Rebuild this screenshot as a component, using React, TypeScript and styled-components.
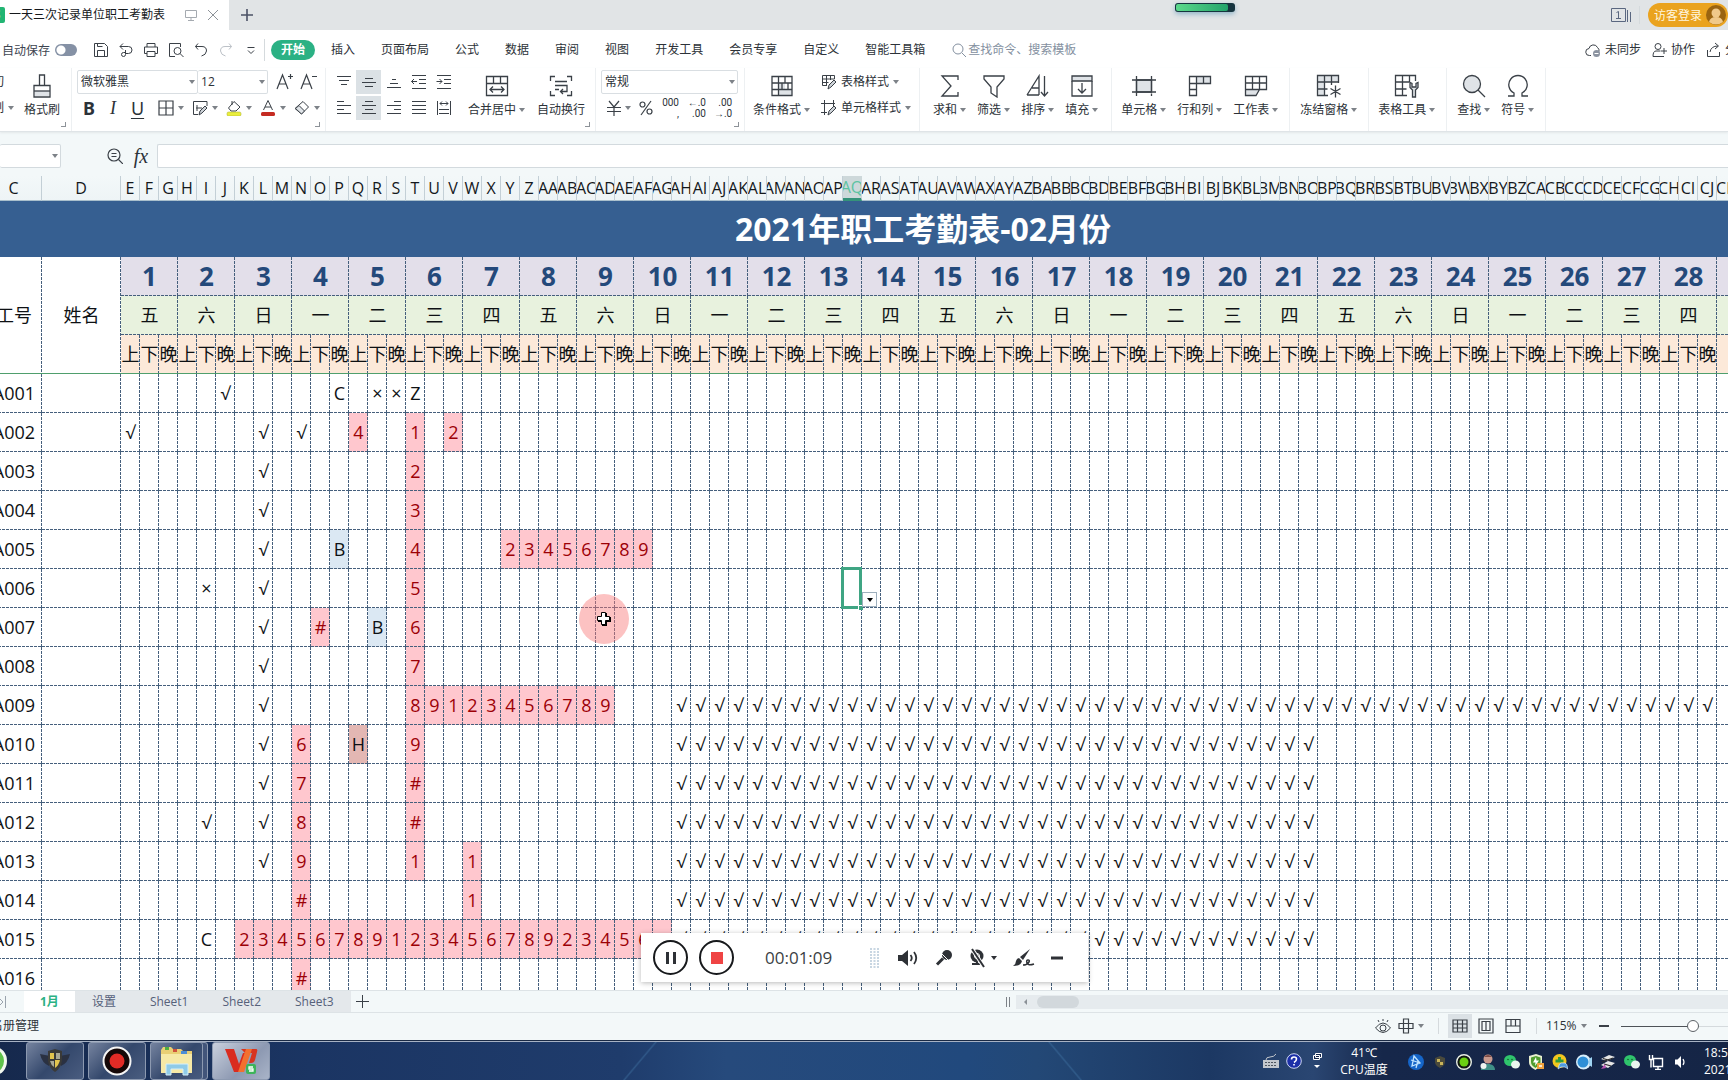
import React from "react";
import styled, { createGlobalStyle, css } from "styled-components";

const GlobalStyle = createGlobalStyle`
  *, *::before, *::after { box-sizing: border-box; }
  body { margin: 0; overflow: hidden; }
  body, button, input, select, table {
    font-family: "Open Sans", "Noto Sans", "Noto Sans CJK SC", sans-serif;
    font-size: 12px;
    color: #2c3238;
  }
  button, select { border: 0; padding: 0; margin: 0; background: none; cursor: pointer; white-space: nowrap; }
  svg { display: block; flex: none; }
`;

const INK = "#3a4047";
const SOFT = "#dfe3e7";
const GREEN = "#2bb184";

/* ---------- shell ---------- */

const Shell = styled.div`
  position: relative;
  display: flex;
  flex-direction: column;
  height: 100vh;
  overflow: hidden;
  background: #f3f8f9;
`;

const Caret = styled.i<{ $color?: string }>`
  flex: none;
  width: 0;
  height: 0;
  border: 3px solid transparent;
  border-top: 4px solid ${(p) => p.$color || "#7d8288"};
  border-bottom: 0;
`;

type IcoProps = { w?: number; h?: number; sw?: number; c?: string; children: React.ReactNode };
const Ico = ({ w = 16, h = 16, sw = 1, c = INK, children }: IcoProps) => (
  <svg width={w} height={h} viewBox={`0 0 ${w} ${h}`} fill="none" stroke={c} strokeWidth={sw} aria-hidden="true">
    {children}
  </svg>
);

/* ---------- title bar ---------- */

const TitleBar = styled.header`
  display: flex;
  align-items: center;
  height: 30px;
  flex: none;
  background: #e1e4e6;
`;

const DocTab = styled.div`
  display: flex;
  align-items: center;
  width: 229px;
  height: 30px;
  padding-right: 10px;
  gap: 10px;
  background: #fff;
`;

const DocLogo = styled.span`
  width: 16px;
  height: 16px;
  margin-left: -11px;
  border-radius: 2px;
  background: #22b573;
  color: #fff;
  font-weight: 700;
  line-height: 16px;
  text-align: center;
`;

const DocName = styled.span`
  flex: 1;
  margin-left: -6px;
  line-height: 20px;
  color: #15181c;
  white-space: nowrap;
`;

const PlainButton = styled.button<{ $l?: number }>`
  display: flex;
  align-items: center;
  gap: 4px;
  margin-left: ${(p) => p.$l ?? 0}px;
  line-height: 16px;
`;

const TitleRight = styled.div`
  display: flex;
  align-items: center;
  gap: 8px;
  margin-left: auto;
`;

const ThinRule = styled.span<{ $h?: number }>`
  flex: none;
  width: 1px;
  height: ${(p) => p.$h || 18}px;
  background: #d5dadd;
`;

const LoginButton = styled.button`
  display: flex;
  align-items: center;
  gap: 4px;
  height: 24px;
  padding: 0 2px 0 6px;
  border-radius: 12px;
  background: #eaa31f;
  color: #fff6df;
`;

const Battery = styled.div`
  position: absolute;
  top: 3px;
  left: 68%;
  width: 60px;
  height: 9px;
  padding: 1px 7px 1px 1px;
  border-radius: 3px;
  background: #16343f;
  box-shadow: 0 2px 5px #8fb4c8;
  &::before {
    content: "";
    display: block;
    height: 7px;
    border-radius: 2px;
    background: linear-gradient(90deg, #5cd98c, #23a36b);
  }
`;

/* ---------- menu ---------- */

const MenuBar = styled.nav`
  display: flex;
  align-items: center;
  height: 38px;
  flex: none;
  padding-top: 1px;
  background: #fff;
  overflow: hidden;
`;

const AutoSave = styled.label`
  display: flex;
  align-items: center;
  gap: 5px;
  padding-left: 2px;
  color: #3d4450;
`;

const Toggle = styled.input`
  appearance: none;
  width: 22px;
  height: 12px;
  margin: 0;
  border-radius: 6px;
  background: radial-gradient(circle at 6px 6px, #fff 0 4px, transparent 5px) #8591a5;
`;

const QuickTools = styled.div`
  display: flex;
  align-items: center;
  gap: 9px;
  margin: 0 5px 0 16px;
`;

const MenuItem = styled.button<{ $active?: boolean }>`
  height: 20px;
  padding: 0 13px;
  line-height: 20px;
  ${(p) =>
    p.$active &&
    css`
      margin: 0 3px 0 6px;
      padding: 0 10px;
      border-radius: 10px;
      background: ${GREEN};
      color: #fff;
      font-weight: 700;
    `}
`;

const SearchBox = styled.label`
  display: flex;
  align-items: center;
  gap: 2px;
  margin-left: 14px;
  input {
    width: 130px;
    padding: 0;
    border: 0;
    outline: 0;
    line-height: 16px;
    &::placeholder { color: #8490a0; opacity: 1; }
  }
`;

const MenuRight = styled.div`
  display: flex;
  align-items: center;
  gap: 11px;
  margin-left: auto;
  margin-right: -21px;
`;

/* ---------- ribbon ---------- */

const Ribbon = styled.div`
  display: flex;
  height: 64px;
  flex: none;
  background: #fff;
  border-bottom: 1px solid #dfe4e7;
  box-shadow: 0 1px 2px #e3e8ea;
  overflow: hidden;
`;

const Group = styled.section<{ $l?: number; $r?: number; $gap?: number }>`
  position: relative;
  display: flex;
  flex: none;
  gap: ${(p) => p.$gap ?? 11}px;
  padding: 2px ${(p) => p.$r ?? 11}px 0 ${(p) => p.$l ?? 9}px;
  border-right: 1px solid #edf0f2;
`;

const Launcher = styled.i`
  position: absolute;
  right: 5px;
  bottom: 4px;
  width: 5px;
  height: 5px;
  border-right: 1px solid #8d9298;
  border-bottom: 1px solid #8d9298;
`;

const Rows = styled.div<{ $cut?: boolean }>`
  display: flex;
  flex-direction: column;
  gap: 2px;
  margin-left: ${(p) => (p.$cut ? -20 : 0)}px;
`;

const Row = styled.div<{ $gap?: number; $between?: boolean; $l?: number }>`
  display: flex;
  align-items: center;
  height: 24px;
  margin-left: ${(p) => p.$l ?? 0}px;
  gap: ${(p) => p.$gap ?? 0}px;
  ${(p) => p.$between && "justify-content: space-between; padding: 0 6px;"}
`;

const Big = styled.button`
  display: flex;
  flex-direction: column;
  align-items: center;
  gap: 4px;
  height: 52px;
  padding-top: 4px;
  span {
    display: flex;
    align-items: center;
    gap: 3px;
    line-height: 16px;
  }
`;

const IconButton = styled.button<{ $on?: boolean; $w?: number }>`
  display: flex;
  align-items: center;
  justify-content: center;
  width: ${(p) => p.$w ?? 25}px;
  height: 24px;
  background: ${(p) => (p.$on ? "#dbe1e5" : "transparent")};
`;

const GlyphButton = styled(IconButton)<{ $style: "b" | "i" | "u" }>`
  font-size: 18px;
  line-height: 20px;
  font-weight: ${(p) => (p.$style === "b" ? 700 : 400)};
  font-style: ${(p) => (p.$style === "i" ? "italic" : "normal")};
  font-family: ${(p) => (p.$style === "i" ? '"Liberation Serif", serif' : '"Noto Sans", sans-serif')};
  text-decoration: ${(p) => (p.$style === "u" ? "underline" : "none")};
  text-underline-offset: 3px;
`;

const SelectBox = styled.label<{ $w: number; $joined?: boolean }>`
  display: flex;
  align-items: center;
  width: ${(p) => p.$w}px;
  height: 24px;
  padding: 0 2px 0 3px;
  border: 1px solid #d9dee2;
  border-left-width: ${(p) => (p.$joined ? 0 : 1)}px;
  border-radius: 2px;
  background: #fff;
  select {
    flex: 1;
    min-width: 0;
    appearance: none;
    outline: 0;
    line-height: 16px;
  }
`;

const Digits = styled.span`
  display: flex;
  flex-direction: column;
  align-items: flex-end;
  font-family: "Roboto", "Noto Sans", sans-serif;
  font-size: 10px;
  line-height: 11px;
`;

/* ---------- formula bar ---------- */

const FormulaBar = styled.div`
  display: flex;
  align-items: center;
  height: 44px;
  flex: none;
  padding-top: 4px;
`;

const NameBox = styled.label`
  display: flex;
  align-items: center;
  width: 61px;
  height: 24px;
  padding-right: 2px;
  border: 1px solid #d3dade;
  border-left: 0;
  border-radius: 2px;
  background: #fff;
  input { flex: 1; min-width: 0; padding: 0; border: 0; outline: 0; }
`;

const FormulaTools = styled.div`
  display: flex;
  align-items: center;
  gap: 10px;
  margin: 0 8px 0 46px;
`;

const Fx = styled.button`
  width: 16px;
  font-family: "Liberation Serif", serif;
  font-style: italic;
  font-size: 20px;
  line-height: 20px;
`;

const FormulaInput = styled.input`
  flex: 1;
  height: 24px;
  border: 1px solid #d3dade;
  border-right: 0;
  border-radius: 2px 0 0 2px;
  background: #fff;
  outline: 0;
`;

/* ---------- sheet ---------- */

const SheetPane = styled.main`
  position: relative;
  flex: 1;
  min-height: 0;
  overflow: hidden;
  background: #fff;
`;

const Sheet = styled.table`
  table-layout: fixed;
  width: 1874px;
  margin-left: -14px;
  border-collapse: separate;
  border-spacing: 0;
  th, td { text-align: center; font-weight: 400; white-space: nowrap; }
`;

const Col = styled.col<{ $w: number }>`
  width: ${(p) => p.$w}px;
`;

const ColHead = styled.th<{ $on?: boolean }>`
  height: 25px;
  padding: 0;
  background: ${(p) => (p.$on ? "#cdd8da" : "linear-gradient(#f3f8f9, #eef4f6)")};
  border-right: 1px solid ${(p) => (p.$on ? "#cdd8da" : "#c3cfd6")};
  border-bottom: ${(p) => (p.$on ? "3px solid #35937a" : "1px solid #a9bfcc")};
  div {
    display: flex;
    justify-content: center;
    overflow: hidden;
    font-size: 16px;
    line-height: 22px;
    color: ${(p) => (p.$on ? "#5cc3a2" : "#14181c")};
  }
`;

const dashes = css`
  background-image:
    repeating-linear-gradient(to bottom, #455f7c 0 3px, transparent 3px 4px),
    repeating-linear-gradient(to right, #455f7c 0 3px, transparent 3px 4px);
  background-size: 1px 100%, 100% 1px;
  background-position: right top, left bottom;
  background-repeat: no-repeat;
`;

const Banner = styled.th`
  height: 56px;
  padding: 0;
  background: #365f91;
  && { font-size: 32px; font-weight: 700; }
  line-height: 40px;
  color: #fff;
`;

const fills: Record<string, string> = {
  day: "#e3dfea",
  week: "#e8f2de",
  shift: "#fce9d9",
  pink: "#ffc7ce",
  blue: "#dbe8f3",
  rust: "#e3b7b3",
  none: "#fff",
};

const Cell = styled.td<{ $fill?: string }>`
  position: relative;
  height: 39px;
  padding: 0 0 2px;
  font-size: 18px;
  line-height: 26px;
  color: ${(p) => (p.$fill === "pink" ? "#9c0006" : "#0e1114")};
  background-color: ${(p) => fills[p.$fill || "none"]};
  ${dashes}
`;

const HeadCell = styled(Cell).attrs({ as: "th" })<{ $edge?: boolean }>`
  ${(p) => p.$edge && "background-size: 1px 100%, 0 0; border-bottom: 1px solid #4f9f6d; padding-bottom: 0;"}
`;

const DayCell = styled(HeadCell)`
  && { font-size: 26px; font-weight: 700; }
  color: #24497a;
`;

const Selection = styled.div`
  position: absolute;
  z-index: 2;
  inset: -2px 0 -1px -2px;
  border: 3px solid #3fa583;
  &::after {
    content: "";
    position: absolute;
    right: -4px;
    bottom: -4px;
    width: 5px;
    height: 5px;
    background: #3fa583;
    border: 1px solid #fff;
    border-width: 1px 0 0 1px;
  }
`;

const CellMenu = styled.button`
  position: absolute;
  z-index: 3;
  left: 19px;
  bottom: 1px;
  display: flex;
  align-items: center;
  justify-content: center;
  width: 15px;
  height: 15px;
  border: 1px solid #9fb0bd;
  background: #fff;
`;

const Pointer = styled.div`
  position: absolute;
  left: 579px;
  top: 418px;
  width: 50px;
  height: 50px;
  display: flex;
  align-items: center;
  justify-content: center;
  border-radius: 50%;
  background: rgba(249, 120, 120, 0.45);
`;

/* ---------- recorder ---------- */

const Recorder = styled.div`
  position: absolute;
  z-index: 5;
  left: 641px;
  bottom: 8px;
  display: flex;
  align-items: center;
  width: 447px;
  height: 49px;
  padding-left: 12px;
  background: #fff;
  box-shadow: 0 1px 5px rgba(0, 0, 0, 0.28);
`;

const RoundButton = styled.button`
  display: flex;
  align-items: center;
  justify-content: center;
  width: 35px;
  height: 35px;
  margin-right: 11px;
  border: 2px solid #17191c;
  border-radius: 50%;
`;

const Timer = styled.time`
  margin: 0 38px 0 20px;
  font-size: 17px;
  line-height: 24px;
  color: #3b3f44;
`;

const RecTools = styled.div`
  display: flex;
  align-items: center;
  gap: 16px;
  margin-left: 18px;
`;

/* ---------- sheet tabs and status ---------- */

const TabsBar = styled.div`
  display: flex;
  align-items: center;
  height: 22px;
  flex: none;
  border-top: 1px solid #dde3e6;
`;

const TabNav = styled.button`
  width: 24px;
  height: 21px;
`;

const SheetTab = styled.button<{ $active?: boolean }>`
  height: 21px;
  padding: 0 ${(p) => (p.$active ? 16 : 17)}px;
  line-height: 20px;
  background: ${(p) => (p.$active ? "#fff" : "#e4e8eb")};
  color: ${(p) => (p.$active ? GREEN : "#56617a")};
  font-weight: ${(p) => (p.$active ? 700 : 400)};
`;

const ScrollArea = styled.div`
  display: flex;
  align-items: center;
  gap: 6px;
  width: 722px;
  margin-left: auto;
`;

const ScrollTrack = styled.div`
  display: flex;
  align-items: center;
  flex: 1;
  height: 14px;
  padding-left: 8px;
  gap: 10px;
  background: #e6ebee;
  i {
    border: 3px solid transparent;
    border-left: 0;
    border-right: 3px solid #8b9197;
  }
  span {
    width: 42px;
    height: 12px;
    border-radius: 6px;
    background: #d2d8dc;
  }
`;

const StatusBar = styled.div`
  display: flex;
  align-items: center;
  height: 28px;
  flex: none;
  padding-bottom: 2px;
  border-top: 1px solid #dde3e6;
  > p { margin: 0 0 0 -9px; line-height: 16px; white-space: nowrap; }
`;

const StatusRight = styled.div`
  display: flex;
  align-items: center;
  width: 353px;
  margin-left: auto;
`;

const StatusGroup = styled.div<{ $gap: number; $l?: number; $r?: number }>`
  display: flex;
  align-items: center;
  gap: ${(p) => p.$gap}px;
  padding: 0 ${(p) => p.$r ?? 0}px 0 ${(p) => p.$l ?? 0}px;
`;

const Zoom = styled.input`
  appearance: none;
  flex: 1;
  min-width: 0;
  height: 14px;
  margin: 0 0 0 12px;
  background: linear-gradient(90deg, #4e5358 0 74px, #d5dadd 74px) 0 7px / 100% 1px no-repeat;
  &::-webkit-slider-thumb {
    appearance: none;
    width: 12px;
    height: 12px;
    border: 1px solid #5c6166;
    border-radius: 50%;
    background: #fff;
  }
`;

/* ---------- taskbar ---------- */

const TaskBar = styled.footer`
  display: flex;
  align-items: center;
  height: 40px;
  flex: none;
  border-top: 1px solid #1a2a45;
  box-shadow: inset 0 1px 0 #a7b2c4;
  background:
    linear-gradient(130deg, transparent 0 49%, rgba(62, 112, 160, 0.5) 50%, transparent 51%) 560px 0 / 160px 40px no-repeat,
    linear-gradient(230deg, transparent 0 49%, rgba(62, 112, 160, 0.5) 50%, transparent 51%) 985px 0 / 160px 40px no-repeat,
    linear-gradient(90deg, #16294d 0, #1b3563 18%, #1f3c6c 36%, #264a7c 42%, #21497d 56%, #234876 60%, #1c3863 70%, #2a4672 76%, #16274a 80%, #152546 100%);
  overflow: hidden;
`;

const Orb = styled.span`
  width: 24px;
  height: 28px;
  margin: 0 19px 0 -17px;
  border: 3px solid #f2f8ee;
  border-radius: 50%;
  background: #5fc24b;
  flex: none;
`;

const TaskButton = styled.button<{ $lit?: boolean; $stack?: boolean }>`
  display: flex;
  align-items: center;
  justify-content: center;
  flex: none;
  width: 58px;
  height: 38px;
  margin: 1px 4px 0 0;
  padding-right: ${(p) => (p.$stack ? 5 : 0)}px;
  border: 1px solid #8c99b0;
  border-radius: 3px;
  background: ${(p) =>
    p.$lit
      ? "linear-gradient(135deg, #c9d0dd, #8d99b2 60%, #a9b4c8)"
      : "linear-gradient(135deg, #75839f, #34486c 50%, #4a5d80)"};
  box-shadow: ${(p) => (p.$stack ? "inset -4px 0 0 #42557a, inset -5px 0 0 #8c99b0" : "none")};
`;

const Tray = styled.div`
  display: flex;
  align-items: center;
  margin-left: auto;
  color: #fff;
`;

const TrayText = styled.div<{ $w: number; $left?: boolean }>`
  width: ${(p) => p.$w}px;
  text-align: ${(p) => (p.$left ? "left" : "center")};
  line-height: 17px;
  white-space: nowrap;
`;

const TrayIcons = styled.div`
  display: flex;
  align-items: center;
  gap: 8px;
  margin: 2px 16px 0 5px;
`;

/* ---------- data ---------- */

type Mark = [string, string?];
const P = "pink";

const seq = (from: number, text: string, fill?: string): Record<number, Mark> => {
  const out: Record<number, Mark> = {};
  [...text].forEach((ch, i) => (out[from + i] = [ch, fill]));
  return out;
};
const ticks = (from: number, to: number) => seq(from, "√".repeat(to - from + 1));
const tick = { 7: ["√"] as Mark };

const rows: Record<number, Mark>[] = [
  { 5: ["√"], 11: ["C"], 13: ["×"], 14: ["×"], 15: ["Z"] },
  { 0: ["√"], ...tick, 9: ["√"], 12: ["4", P], 15: ["1", P], 17: ["2", P] },
  { ...tick, 15: ["2", P] },
  { ...tick, 15: ["3", P] },
  { ...tick, 11: ["B", "blue"], 15: ["4", P], ...seq(20, "23456789", P) },
  { 4: ["×"], ...tick, 15: ["5", P] },
  { ...tick, 10: ["#", P], 13: ["B", "blue"], 15: ["6", P] },
  { ...tick, 15: ["7", P] },
  { ...tick, ...seq(15, "89123456789", P), ...ticks(29, 83) },
  { ...tick, 9: ["6", P], 12: ["H", "rust"], 15: ["9", P], ...ticks(29, 62) },
  { ...tick, 9: ["7", P], 15: ["#", P], ...ticks(29, 62) },
  { 4: ["√"], ...tick, 9: ["8", P], 15: ["#", P], ...ticks(29, 62) },
  { ...tick, 9: ["9", P], 15: ["1", P], 18: ["1", P], ...ticks(29, 62) },
  { 9: ["#", P], 18: ["1", P], ...ticks(29, 62) },
  { 4: ["C"], ...seq(6, "23456789123456789234567", P), ...ticks(29, 62) },
  { 9: ["#", P] },
];

const COLS = Array.from({ length: 85 }, (_, i) => i);
const DAYS = Array.from({ length: 28 }, (_, i) => i + 1);
const WEEK = "五六日一二三四";
const SHIFTS = "上下晚";

const letter = (i: number): string => {
  const n = i + 4;
  const ch = String.fromCharCode(65 + (n % 26));
  return n < 26 ? ch : String.fromCharCode(64 + Math.floor(n / 26)) + ch;
};

/* ---------- icons ---------- */

const lines = (rowsDef: [number, number][], y0: number, step: number) =>
  rowsDef.map(([a, b], i) => `M${a} ${y0 + i * step}H${b}`).join("");

const AlignIco = ({ d }: { d: string }) => (
  <Ico w={16} h={16} sw={1}>
    <path d={d} />
  </Ico>
);

const Pen = ({ x, y }: { x: number; y: number }) => (
  <path d={`M${x} ${y + 8}l1-4 5-5 2 2-5 5-3 2z`} fill="#cdd2d7" />
);

const vAlign = [
  lines([[1, 15], [3, 13], [5, 11]], 2.5, 4),
  lines([[4, 12], [1, 15], [4, 12]], 4.5, 4),
  lines([[6, 10], [4, 12], [1, 15]], 5.5, 4),
];
const hAlign = [
  lines([[1, 8], [1, 15], [1, 8], [1, 15]], 1.5, 4),
  lines([[4, 12], [1, 15], [4, 12], [1, 15]], 1.5, 4),
  lines([[8, 15], [1, 15], [8, 15], [1, 15]], 1.5, 4),
  lines([[1, 15], [1, 15], [1, 15], [1, 15]], 1.5, 4),
];

const BigIcons: Record<string, React.ReactNode> = {
  brush: (
    <Ico w={20} h={24} sw={1.3}>
      <path d="M7.5 11V1h5v10M2 11.5h16V23H2z" />
      <path d="M3 17h14v5H3z" fill={SOFT} stroke="none" />
      <path d="M2 17h16" />
    </Ico>
  ),
  merge: (
    <Ico w={24} h={24} sw={1.3}>
      <path d="M1.5 2.5h21v19h-21zM1.5 9.5h21M8.5 2.5v7M15.5 2.5v7M5 15.5h14M8 12.5l-3 3 3 3M16 12.5l3 3-3 3" />
    </Ico>
  ),
  wrap: (
    <Ico w={24} h={24} sw={1.3}>
      <path d="M6 2.5H1.5V7M18 2.5h4.5V7M6 21.5H1.5V17M18 21.5h4.5V17M6 7.5h12M6 11.5h12v6h-6M6 15.5h4M14 15l-2.5 2.5L14 20" />
    </Ico>
  ),
  cond: (
    <Ico w={22} h={24} sw={1.3}>
      <path d="M8 9h6v6H8zM8 15h13v6H8z" fill={SOFT} stroke="none" />
      <path d="M1 2.5h20v19H1zM1 9h20M1 15.5h20M7.5 2.5v19M14 2.5v6.5M11 9v6.5M17 9v6.5" />
    </Ico>
  ),
  sum: (
    <Ico w={20} h={24} sw={1.3}>
      <path d="M18 6V2H2l9 10-9 10h16v-4" />
    </Ico>
  ),
  filter: (
    <Ico w={22} h={24} sw={1.3}>
      <path d="M1 2h20v3l-7 8v10l-6-4v-6L1 5z" />
    </Ico>
  ),
  sort: (
    <Ico w={24} h={24} sw={1.3}>
      <path d="M1 21L13 2v19M1 21h12M6 14h7M18.5 2v19.5M15 18l3.5 4 3.5-4" />
    </Ico>
  ),
  fill: (
    <Ico w={22} h={24} sw={1.3}>
      <path d="M1 2h20v5H1z" fill={SOFT} />
      <path d="M1 7v15h20V7M11 9v10M7 15l4 4 4-4" />
    </Ico>
  ),
  cells: (
    <Ico w={24} h={24} sw={1.3}>
      <path d="M4.5 6h15v12h-15z" fill={SOFT} />
      <path d="M4.5 2v20M19.5 2v15M19.5 19.5v2.5M0 6h24M0 18h24" />
    </Ico>
  ),
  rowcol: (
    <Ico w={24} h={24} sw={1.3}>
      <path d="M9 3h13v6H9z" fill={SOFT} stroke="none" />
      <path d="M1.5 2.5h21v7H8.5v12h-7zM1.5 9.5h7M8.5 2.5v7M15.5 2.5v7M1.5 15.5h7" />
    </Ico>
  ),
  sheet: (
    <Ico w={24} h={24} sw={1.3}>
      <path d="M2 15h13l-3 6.5H2z" fill={SOFT} stroke="none" />
      <path d="M1.5 2.5h21v13h-21zM1.5 9h21M8.5 2.5v13M15.5 2.5v13M1.5 15.5v6H12l3.5-6" />
    </Ico>
  ),
  freeze: (
    <Ico w={26} h={24} sw={1.3}>
      <path d="M2 2h20v6H8v13H2z" fill={SOFT} stroke="none" />
      <path d="M22.5 9V1.5h-21v20H12M1.5 8h21M1.5 15h10M8.5 1.5v20M15.5 1.5V11M19.5 11.5v12M14.5 14.5l10 6M24.5 14.5l-10 6" />
    </Ico>
  ),
  tools: (
    <Ico w={26} h={24} sw={1.3}>
      <path d="M21.5 7V1.5h-20v20H13M1.5 8h14M1.5 15h11M8.5 1.5v20M15.5 1.5V8" />
      <path d="M16 8.5v5l2.500 2.500v7h3v-7l2.500-2.500v-5l-2 1v3.500h-4V9.500z" fill={SOFT} />
    </Ico>
  ),
  find: (
    <Ico w={24} h={24} sw={1.3}>
      <circle cx="10" cy="10" r="8.5" fill={SOFT} />
      <path d="M16 16l7 7" />
    </Ico>
  ),
  omega: (
    <Ico w={22} h={24} sw={1.3}>
      <path d="M1 22h6v-3a9.200 9.200 0 1 1 8 0v3h6" />
    </Ico>
  ),
};

const BigBtn = ({ icon, label, caret = true }: { icon: string; label: string; caret?: boolean }) => (
  <Big>
    {BigIcons[icon]}
    <span>
      {label}
      {caret && <Caret />}
    </span>
  </Big>
);

const Chat = () => (
  <>
    <ellipse cx="6" cy="6.5" rx="6" ry="5.5" fill="#2fc46c" />
    <ellipse cx="11.5" cy="10.5" rx="4.5" ry="4" fill="#eaf6ee" />
    <circle cx="4" cy="5.5" r=".8" fill="#125a2e" />
    <circle cx="8" cy="5.5" r=".8" fill="#125a2e" />
  </>
);

const TRAY: React.ReactNode[] = [
  <><circle cx="8" cy="8" r="8" fill="#1565c8" /><path d="M6 2l6 7-8 3zM3 6l9 3M8 14l2-7" stroke="#bfe3ff" strokeWidth="1.3" fill="none" /></>,
  <><path d="M3 4l5-2 5 2v4c0 3-3 5-5 6-2-1-5-3-5-6z" fill="#4a4a3c" /><path d="M5 5h3v3H5zM8 8h3v3H8z" fill="#c9b45a" /></>,
  <><circle cx="8" cy="8" r="7.3" fill="#101810" stroke="#e9efe6" strokeWidth="1.4" /><circle cx="8" cy="8" r="4.5" fill="#6ad012" /></>,
  <><circle cx="8" cy="5" r="4.5" fill="#c99a8e" /><path d="M1 16c0-5 3-6 7-6s7 2 7 6z" fill="#3f8f86" /><circle cx="3.5" cy="12" r="3" fill="#eef3f0" /><path d="M4 3q4-4 8 0z" fill="#7b4a44" /></>,
  <Chat />,
  <><path d="M1 2l7-2 6 2v6c0 4-4 6-6.500 8C4 14 1 12 1 8z" fill="#e8efd0" /><path d="M3 3.5L8 2l4.500 1.500V8c0 3-3 4-5 6C5 12 3 11 3 8z" fill="#4f9c2e" /><path d="M8 3L5 8.500h2.500L7 12l4-5.500H8.500z" fill="#fff" /><path d="M9 9h7v6H9z" fill="#f0a23c" /><path d="M11 12h3" stroke="#fff" strokeWidth="1.5" /></>,
  <><circle cx="7.5" cy="7" r="7" fill="#f2c61e" /><path d="M7.500 3v5M3.500 7h8" stroke="#2f9b3a" strokeWidth="3" /><path d="M6 15q1-6 3-6h4q2 0 3 6l-3-2H9z" fill="#4f9be0" stroke="#eef6fc" strokeWidth=".6" /></>,
  <><circle cx="7.5" cy="8" r="7.5" fill="#d9eefa" /><circle cx="7" cy="8" r="5.5" fill="#2f8fd6" /><path d="M13 5l3-2v10l-3-2z" fill="#9fd4f2" /></>,
  <><path d="M1 5l8-4 6 2-8 4zM1 11l7-4 7 2-7 5z" fill="#e6e6e6" /><path d="M3 4.500l7 2M4 10l7 2M2 8l11-4" stroke="#2b2b2b" strokeWidth="1.3" /><path d="M1 15l4-5 1 4z" fill="#b552b0" /></>,
  <Chat />,
  <path d="M5.500 4.500h9v8h-9zM7 15.500h6M10 12.500v3M1.500 1v4.500h3V1M3 5.500v8" stroke="#fff" strokeWidth="1.4" fill="none" />,
  <><path d="M3 5.500h2.500L9 2v12l-3.500-3.500H3z" fill="#fff" /><path d="M11 5q2 3 0 6" stroke="#fff" strokeWidth="1.2" fill="none" /></>,
];

/* ---------- sections ---------- */

const MENUS = ["开始", "插入", "页面布局", "公式", "数据", "审阅", "视图", "开发工具", "会员专享", "自定义", "智能工具箱"];

const Top = () => (
  <>
    <TitleBar>
      <DocTab>
        <DocLogo>S</DocLogo>
        <DocName>一天三次记录单位职工考勤表</DocName>
        <Ico w={12} h={12} c="#a5aab0"><path d="M.5 1.500h11v7H.5zM6 8.500v3M3 11.500h6" /></Ico>
        <PlainButton aria-label="关闭">
          <Ico w={12} h={12} c="#8d9298"><path d="M1 1l10 10M11 1L1 11" /></Ico>
        </PlainButton>
      </DocTab>
      <PlainButton $l={12} aria-label="新建">
        <Ico w={12} h={12} sw={1.6} c="#4b5166"><path d="M6 0v12M0 6h12" /></Ico>
      </PlainButton>
      <TitleRight>
        <Ico w={20} h={14} c="#5a6780">
          <path d="M.5.5h14v13H.5zM16.500 2v12M19.500 4v10M5.500 4.500l2-1v7M5 10.500h5" />
        </Ico>
        <ThinRule />
        <LoginButton>
          访客登录
          <svg width="20" height="20" viewBox="0 0 20 20">
            <circle cx="10" cy="10" r="10" fill="#9a6410" />
            <circle cx="10" cy="8" r="4.5" fill="#f0c98a" />
            <path d="M3 17q1-5 7-5t7 5q-7 5-14 0z" fill="#f0c98a" />
          </svg>
        </LoginButton>
      </TitleRight>
    </TitleBar>
    <Battery />
    <MenuBar>
      <AutoSave>
        自动保存
        <Toggle type="checkbox" />
      </AutoSave>
      <QuickTools>
        <PlainButton aria-label="保存"><Ico><path d="M1.500 1.500h10l3 3v10h-13zM4.500 14.500v-6h7v6M4.500 1.500v3h5" /></Ico></PlainButton>
        <PlainButton aria-label="输出"><Ico><path d="M2 4.500h8.500a3.500 3.500 0 0 1 0 7H7.500M5 1.500l-3 3 3 3M7.500 8v4.500a2 2 0 1 1-2-2h2" /></Ico></PlainButton>
        <PlainButton aria-label="打印"><Ico><path d="M4 5V1.500h8V5M4 11.500H1.500V5h13v6.500H12M4 9.500h8v5H4z" /></Ico></PlainButton>
        <PlainButton aria-label="预览"><Ico><path d="M7 14.500H1.500v-13h11V5" /><circle cx="9.5" cy="9" r="3.5" /><path d="M12 11.500l3.500 3.500" /></Ico></PlainButton>
        <PlainButton aria-label="撤销"><Ico><path d="M5 1.500L2.500 4.500 5 7.500M2.500 4.500H9q4.500 0 4.500 4.500-.5 4-5 5" /></Ico></PlainButton>
        <PlainButton aria-label="恢复"><Ico c="#bcc1c7"><path d="M11 1.500l2.500 3-2.500 3M13.500 4.500H7Q2.500 4.500 2.500 9 3 13 7.500 14" /></Ico></PlainButton>
        <PlainButton aria-label="更多"><Ico><path d="M4.500 5.500h7M5 8.500l3 3 3-3" /></Ico></PlainButton>
      </QuickTools>
      <ThinRule $h={22} />
      {MENUS.map((m, i) => (
        <MenuItem key={m} $active={i === 0}>{m}</MenuItem>
      ))}
      <SearchBox>
        <Ico w={14} h={14} c="#8490a0"><circle cx="6" cy="6" r="5" /><path d="M10 10l4 4" /></Ico>
        <input aria-label="搜索" placeholder="查找命令、搜索模板" />
      </SearchBox>
      <MenuRight>
        <PlainButton>
          <Ico>
            <path d="M6 13.500H4.500a3.500 3.500 0 0 1-.5-7 4.500 4.500 0 0 1 8.500-1 4 4 0 0 1 1.500 4" />
            <circle cx="11.5" cy="11.5" r="3.5" fill="#8b93a0" stroke="none" />
            <path d="M9.500 11.500h4" stroke="#fff" />
          </Ico>
          未同步
        </PlainButton>
        <PlainButton>
          <Ico w={15}><circle cx="6" cy="4.500" r="3" /><path d="M8.500 9H4q-3 0-3 5.500h11M12 6v6M9 9h6" /></Ico>
          协作
        </PlainButton>
        <PlainButton>
          <Ico w={15}><path d="M1.500 8v6.500h12V10M4 10q1-6 8-6M9 1l3.500 3L9 7" /></Ico>
          分享
        </PlainButton>
      </MenuRight>
    </MenuBar>
  </>
);

const NumButton = ({ label, a, b }: { label: string; a: string; b: string }) => (
  <IconButton $w={18} aria-label={label}>
    <Digits><span>{a}</span><span>{b}</span></Digits>
  </IconButton>
);

const RibbonBar = () => (
  <Ribbon>
    <Group $l={0} $gap={10}>
      <Rows $cut>
        <Row><PlainButton>剪切</PlainButton></Row>
        <Row><PlainButton>复制<Caret /></PlainButton></Row>
      </Rows>
      <BigBtn icon="brush" label="格式刷" caret={false} />
      <Launcher />
    </Group>
    <Group $l={5} $r={5} $gap={0}>
      <Rows>
        <Row>
          <SelectBox $w={121}>
            <select aria-label="字体"><option>微软雅黑</option></select>
            <Caret />
          </SelectBox>
          <SelectBox $w={70} $joined>
            <select aria-label="字号"><option>12</option></select>
            <Caret />
          </SelectBox>
          <Row $gap={7} $l={8}>
            <IconButton $w={17} aria-label="增大字号">
              <Ico w={17} h={18} sw={1.2}><path d="M1 16L6.500 2 12 16M3 11h7M14.500 1v5M12 3.500h5" /></Ico>
            </IconButton>
            <IconButton $w={17} aria-label="减小字号">
              <Ico w={17} h={18} sw={1.2}><path d="M1 16L6.500 2 12 16M3 11h7M12 3.500h5" /></Ico>
            </IconButton>
          </Row>
        </Row>
        <Row $gap={8}>
          <Row>
            <GlyphButton $style="b" $w={24}>B</GlyphButton>
            <GlyphButton $style="i" $w={24}>I</GlyphButton>
            <GlyphButton $style="u" $w={25}>U</GlyphButton>
          </Row>
          <PlainButton aria-label="边框"><Ico sw={1.2}><path d="M1 1h14v14H1zM8 1v14M1 8h14" /></Ico><Caret /></PlainButton>
          <PlainButton aria-label="绘图边框"><Ico><path d="M15 6V1.500H1.500v13H6M5 5v6M4 8h6" /><Pen x={7} y={7} /></Ico><Caret /></PlainButton>
          <PlainButton aria-label="填充颜色"><Ico><path d="M8 1.500l6 5.500-4 4H5L2.500 8zM6 1v4" /><rect x="1" y="12" width="14" height="4" rx="1.5" fill="#e9ee3c" stroke="#a9ad2d" strokeWidth=".5" /></Ico><Caret /></PlainButton>
          <PlainButton aria-label="字体颜色"><Ico><path d="M3.500 10L8 .5l4.500 9.500M5 7h6" /><rect x="1" y="12" width="14" height="4" rx="1.5" fill="#c52b22" stroke="none" /></Ico><Caret /></PlainButton>
          <PlainButton aria-label="清除"><Ico><path d="M9 1.500l5.500 5.500L7.500 14 1 8.500z" /><path d="M5 5.500l5.500 5.500-3 3L1.500 8.500z" fill={SOFT} /></Ico><Caret /></PlainButton>
        </Row>
      </Rows>
      <Launcher />
    </Group>
    <Group $l={5} $gap={12} $r={10}>
      <Rows>
        <Row>
          {vAlign.map((d, i) => (
            <IconButton key={i} $on={i === 1} aria-label={["顶端对齐", "垂直居中", "底端对齐"][i]}><AlignIco d={d} /></IconButton>
          ))}
          <IconButton aria-label="减少缩进"><AlignIco d="M1 1.500h14M8 5.500h7M8 9.500h7M1 14.500h14M6 7.500H.5M3 5L.5 7.500 3 10" /></IconButton>
          <IconButton aria-label="增加缩进"><AlignIco d="M1 1.500h14M8 5.500h7M8 9.500h7M1 14.500h14M.5 7.500H6M3.500 5L6 7.500 3.500 10" /></IconButton>
        </Row>
        <Row>
          {hAlign.map((d, i) => (
            <IconButton key={i} $on={i === 1} aria-label={["左对齐", "水平居中", "右对齐", "两端对齐"][i]}><AlignIco d={d} /></IconButton>
          ))}
          <IconButton aria-label="分散对齐"><AlignIco d="M1.500 1v14M14.500 1v14M4 3.500h8M6 1.500l-2 2 2 2M10 1.500l2 2-2 2M3 9.500h10M3 13.500h10" /></IconButton>
        </Row>
      </Rows>
      <BigBtn icon="merge" label="合并居中" />
      <BigBtn icon="wrap" label="自动换行" caret={false} />
      <Launcher />
    </Group>
    <Group $l={5} $r={6}>
      <Rows>
        <Row>
          <SelectBox $w={137}>
            <select aria-label="数字格式"><option>常规</option></select>
            <Caret />
          </SelectBox>
        </Row>
        <Row $between>
          <PlainButton aria-label="货币"><Ico w={14} h={16} sw={1.2}><path d="M2 1l5 6 5-6M0 7.500h14M0 11.500h14M7 7v9" /></Ico><Caret /></PlainButton>
          <IconButton $w={14} aria-label="百分比"><Ico w={14} h={16} sw={1.2}><circle cx="3.5" cy="4.5" r="2.5" /><circle cx="10.5" cy="11.5" r="2.5" /><path d="M12 1L2 15" /></Ico></IconButton>
          <NumButton label="千位分隔" a="000" b="," />
          <NumButton label="增加小数" a="←.0" b=".00" />
          <NumButton label="减少小数" a=".00" b="→.0" />
        </Row>
      </Rows>
      <Launcher />
    </Group>
    <Group $l={8} $r={8}>
      <BigBtn icon="cond" label="条件格式" />
      <Rows>
        <Row><PlainButton><Ico><path d="M13.500 5V1.500h-12v10H6M1.500 5h12M1.500 8.500h6M5.500 1.500v10M9.500 1.500V6" /><Pen x={7} y={7} /></Ico>表格样式<Caret /></PlainButton></Row>
        <Row><PlainButton><Ico><path d="M3.500 0v15M0 3.500h14M12.500 0v6M0 12.500h6" /><Pen x={7} y={7} /></Ico>单元格样式<Caret /></PlainButton></Row>
      </Rows>
    </Group>
    <Group $l={13} $r={13}>
      <BigBtn icon="sum" label="求和" />
      <BigBtn icon="filter" label="筛选" />
      <BigBtn icon="sort" label="排序" />
      <BigBtn icon="fill" label="填充" />
    </Group>
    <Group>
      <BigBtn icon="cells" label="单元格" />
      <BigBtn icon="rowcol" label="行和列" />
      <BigBtn icon="sheet" label="工作表" />
    </Group>
    <Group $l={10}><BigBtn icon="freeze" label="冻结窗格" /></Group>
    <Group><BigBtn icon="tools" label="表格工具" /></Group>
    <Group $l={10}>
      <BigBtn icon="find" label="查找" />
      <BigBtn icon="omega" label="符号" />
    </Group>
  </Ribbon>
);

const Grid = () => (
  <Sheet>
    <colgroup>
      <Col $w={56} />
      <Col $w={79} />
      {COLS.map((c) => <Col key={c} $w={19} />)}
      <Col $w={124} />
    </colgroup>
    <thead>
      <tr>
        <ColHead><div>C</div></ColHead>
        <ColHead><div>D</div></ColHead>
        {COLS.map((c) => <ColHead key={c} $on={c === 38}><div>{letter(c)}</div></ColHead>)}
        <ColHead />
      </tr>
      <tr><Banner colSpan={88}>2021年职工考勤表-02月份</Banner></tr>
      <tr>
        <HeadCell rowSpan={3} $edge>工号</HeadCell>
        <HeadCell rowSpan={3} $edge>姓名</HeadCell>
        {DAYS.map((d) => <DayCell key={d} colSpan={3} $fill="day">{d}</DayCell>)}
        <HeadCell $fill="day" colSpan={2} />
      </tr>
      <tr>
        {DAYS.map((d) => <HeadCell key={d} colSpan={3} $fill="week">{WEEK[(d - 1) % 7]}</HeadCell>)}
        <HeadCell $fill="week" colSpan={2} />
      </tr>
      <tr>
        {DAYS.map((d) => [...SHIFTS].map((s) => <HeadCell key={d + s} $fill="shift" $edge>{s}</HeadCell>))}
        <HeadCell $fill="shift" $edge colSpan={2} />
      </tr>
    </thead>
    <tbody>
      {rows.map((r, ri) => (
        <tr key={ri}>
          <Cell>A{String(ri + 1).padStart(3, "0")}</Cell>
          <Cell />
          {COLS.map((c) => (
            <Cell key={c} $fill={r[c]?.[1]}>
              {r[c]?.[0]}
              {ri === 5 && c === 38 && (
                <>
                  <Selection />
                  <CellMenu aria-label="选择"><Caret $color="#000" /></CellMenu>
                </>
              )}
            </Cell>
          ))}
          <Cell />
        </tr>
      ))}
    </tbody>
  </Sheet>
);

const REC = "#2e3136";

const RecorderBar = () => (
  <Recorder>
    <RoundButton aria-label="暂停"><Ico w={10} h={12} sw={3} c={REC}><path d="M1.500 0v12M8.500 0v12" /></Ico></RoundButton>
    <RoundButton aria-label="停止"><Ico w={12} h={12}><path d="M0 0h12v12H0z" fill="#ef4444" stroke="none" /></Ico></RoundButton>
    <Timer>00:01:09</Timer>
    <Ico w={9} h={20} sw={2} c="#c8d6e2"><path d="M1 0v20M4.500 0v20M8 0v20" strokeDasharray="2 1" /></Ico>
    <RecTools>
      <PlainButton aria-label="声音">
        <Ico w={22} h={18} sw={1.8} c={REC}><path d="M1 6h4l6-5v16l-6-5H1z" fill={REC} stroke="none" /><path d="M13.500 6q2.500 3 0 6M17 3q4.500 6 0 12" /></Ico>
      </PlainButton>
      <PlainButton aria-label="麦克风">
        <Ico w={18} h={18} sw={2} c={REC}><circle cx="12" cy="6" r="5" fill={REC} stroke="none" /><path d="M7 5l6 6" stroke="#fff" strokeWidth="1" /><path d="M8 9.500l-6 6" strokeWidth="3" /></Ico>
      </PlainButton>
      <PlainButton aria-label="摄像头">
        <Ico w={18} h={20} sw={2} c={REC}><circle cx="8" cy="8" r="6.5" fill={REC} stroke="none" /><circle cx="8" cy="8" r="2.5" stroke="#fff" strokeWidth="1" /><path d="M3 16h10M8 14v2" /><path d="M3 1l12 18" stroke="#fff" strokeWidth="4" /><path d="M3 1l12 18" /></Ico>
        <Caret $color={REC} />
      </PlainButton>
      <PlainButton aria-label="画笔">
        <Ico w={22} h={18} sw={1.5} c={REC}><path d="M17 0L7 8l3 3z" fill={REC} stroke="none" /><path d="M6 9l3 3q-1 5-9 5 3-2 3-5 1-3 3-3z" fill={REC} stroke="none" /><path d="M10 16q4 0 6-3 1-2-1-2t-1 3q1 3 7 1" /></Ico>
      </PlainButton>
      <PlainButton aria-label="最小化"><Ico w={12} h={4} sw={3} c={REC}><path d="M0 2h12" /></Ico></PlainButton>
    </RecTools>
  </Recorder>
);

const Bottom = () => (
  <>
    <TabsBar>
      <TabNav aria-label="末页"><Ico w={7} h={14} c="#9aa3ad"><path d="M0 4l3 3-3 3M5.500 1v12" /></Ico></TabNav>
      {["1月", "设置", "Sheet1", "Sheet2", "Sheet3"].map((t, i) => (
        <SheetTab key={t} $active={i === 0}>{t}</SheetTab>
      ))}
      <PlainButton aria-label="添加工作表" $l={5}><Ico w={13} h={13}><path d="M6.500 0v13M0 6.500h13" /></Ico></PlainButton>
      <ScrollArea>
        <Ico w={4} h={10} c="#7d8288"><path d="M.5 0v10M3.500 0v10" /></Ico>
        <ScrollTrack><i /><span /></ScrollTrack>
      </ScrollArea>
    </TabsBar>
    <StatusBar>
      <p>名册管理</p>
      <StatusRight>
        <StatusGroup $gap={7} $r={14}>
          <Ico w={16} h={16}><path d="M.5 10q7.500-10 15 0-7.500 9-15 0zM8 1v2M3 2l1 2M13 2l-1 2" /><circle cx="8" cy="10" r="3" /></Ico>
          <PlainButton aria-label="阅读模式"><Ico w={16} h={16} sw={1.2}><path d="M5.500 1h5v14h-5zM1 5.500h14v5H1z" /></Ico><Caret /></PlainButton>
        </StatusGroup>
        <ThinRule $h={16} />
        <StatusGroup $gap={1} $l={9} $r={10}>
          <IconButton $on $w={24} aria-label="普通视图"><Ico sw={1.2}><path d="M1 2h14v12H1zM1 6h14M1 10h14M5.500 2v12M10.500 2v12" /></Ico></IconButton>
          <IconButton $w={26} aria-label="页面布局"><Ico sw={1.2}><path d="M1 1h14v14H1zM4 3.500h8v9H4zM8 3.500v9" /></Ico></IconButton>
          <IconButton $w={26} aria-label="分页预览"><Ico sw={1.2}><path d="M1 1.500h14v13H1zM6 1.500V8H1M10.500 1.500V8H6M10.500 8H15" /></Ico></IconButton>
        </StatusGroup>
        <ThinRule $h={16} />
        <StatusGroup $gap={12} $l={9}>
          <PlainButton>115%<Caret /></PlainButton>
          <PlainButton aria-label="缩小"><Ico w={10} h={4} sw={2}><path d="M0 2h10" /></Ico></PlainButton>
        </StatusGroup>
        <Zoom type="range" aria-label="缩放" min={0} max={100} defaultValue={70} />
      </StatusRight>
    </StatusBar>
    <TaskBar>
      <Orb />
      <TaskButton aria-label="游戏">
        <svg width="30" height="26" viewBox="0 0 30 26">
          <path d="M0 6l10 2-1 10Q2 15 0 6zM30 6L20 8l1 10q7-3 9-12z" fill="#2a3142" />
          <path d="M8 3l7-2 7 2v10q-1 7-7 11-6-4-7-11z" fill="#3a3a38" />
          <path d="M10 5h4v6h-4zM15 12h5q-1 5-5 8z" fill="#e2c44e" />
          <path d="M16 5h4v6h-4zM10 13h4v6q-3-2-4-6z" fill="#a9a894" />
        </svg>
      </TaskButton>
      <TaskButton aria-label="录制">
        <svg width="30" height="30" viewBox="0 0 30 30"><circle cx="15" cy="15" r="13.5" fill="#150808" stroke="#f5f5f5" strokeWidth="2" /><circle cx="15" cy="15" r="7.5" fill="#e22b26" /></svg>
      </TaskButton>
      <TaskButton aria-label="文件夹" $stack>
        <svg width="34" height="30" viewBox="0 0 34 30">
          <path d="M1 4l2-3h8l2 2h8l2 2h9v21H1z" fill="#e9cf74" />
          <path d="M5 1h4v3H5z" fill="#4fae3f" /><path d="M13 3h4v3h-4z" fill="#d0533c" /><path d="M21 5h6v3h-6z" fill="#4d8ed6" />
          <path d="M1 8h31v19H1z" fill="#f6e9a6" />
          <path d="M6 29V18h22v11h-5v-6H11v6z" fill="#8fcbe8" stroke="#d5effa" />
        </svg>
      </TaskButton>
      <TaskButton aria-label="表格" $lit>
        <svg width="34" height="28" viewBox="0 0 34 28">
          <path d="M17 2h15q2 0 1 3l-2 8q-1 3-4 3h-2l3-10h-7z" fill="#d8341f" />
          <path d="M1 2h9l5 15 4-11h6l-7 19h-8z" fill="#d92c20" />
          <path d="M14 25L22 2h6l-8 23z" fill="#f3702f" />
          <rect x="22" y="17" width="10" height="10" rx="2" fill="#3db45a" />
          <path d="M29 20h-4v2h4v2h-4" stroke="#fff" strokeWidth="1.3" fill="none" />
        </svg>
      </TaskButton>
      <Tray>
        <svg width="16" height="16" viewBox="0 0 16 16"><path d="M0 7h16v8H0z" fill="#c3c7cd" /><path d="M2 9.500h12M2 12.500h12" stroke="#4f565f" strokeDasharray="2 1" /><path d="M3 7q0-3 4-3t6-3" stroke="#c3c7cd" fill="none" /></svg>
        <svg width="30" height="16" viewBox="0 0 30 16"><circle cx="15" cy="8" r="7.3" fill="#1b2fa8" stroke="#cdd6f2" /><path d="M12.500 6.500q0-2.500 2.500-2.500t2.500 2-2.500 3.500M15 11v1.500" stroke="#fff" strokeWidth="1.6" fill="none" /></svg>
        <svg width="16" height="20" viewBox="0 0 16 20"><path d="M6.500 2.500h6v4h-6zM4.500 4.500h6v4h-6z" stroke="#fff" fill="#16274a" /><path d="M5 14h6l-3 3z" fill="#fff" /></svg>
        <TrayText $w={78}>41℃<br />CPU温度</TrayText>
        <TrayIcons>
          {TRAY.map((t, i) => <svg key={i} width="16" height="16" viewBox="0 0 16 16">{t}</svg>)}
        </TrayIcons>
        <TrayText $w={24} $left>18:5<br />2021</TrayText>
      </Tray>
    </TaskBar>
  </>
);

export default function App() {
  return (
    <Shell>
      <GlobalStyle />
      <Top />
      <RibbonBar />
      <FormulaBar>
        <NameBox><input aria-label="名称框" /><Caret /></NameBox>
        <FormulaTools>
          <Ico w={16} h={16} sw={1.2}><circle cx="7" cy="7" r="6" /><path d="M11.500 11.500L16 16M4.500 5.500h5M4.500 8.500h5" /></Ico>
          <Fx>fx</Fx>
        </FormulaTools>
        <FormulaInput aria-label="编辑栏" />
      </FormulaBar>
      <SheetPane>
        <Grid />
        <Pointer>
          <svg width="16" height="16" viewBox="0 0 16 16"><path d="M6 2h5v4h4v5h-4v4H6v-4H2V6h4z" fill="#000" /><path d="M5.500 1.500h4v4h4v4h-4v4h-4v-4h-4v-4h4z" fill="#fff" stroke="#000" /></svg>
        </Pointer>
        <RecorderBar />
      </SheetPane>
      <Bottom />
    </Shell>
  );
}
